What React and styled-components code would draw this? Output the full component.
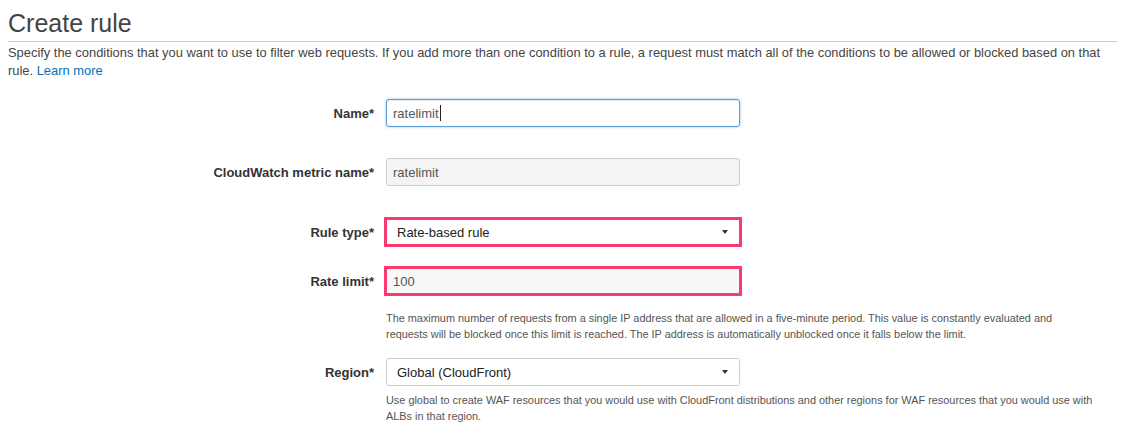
import React from "react";
import styled, { createGlobalStyle } from "styled-components";

const Global = createGlobalStyle`
  html, body { margin: 0; padding: 0; background: #fff; }
  body { font-family: "Liberation Sans", Arial, sans-serif; color: #444; }
`;

const Page = styled.div`
  padding: 0 16px 0 8px;
`;

const Title = styled.h1`
  margin: 7px 0 0;
  font-size: 25px;
  line-height: 32px;
  font-weight: 400;
  color: #444;
`;

const Rule = styled.hr`
  margin: 2px 0 0;
  border: 0;
  border-top: 1px solid #ccc;
  height: 0;
`;

const Intro = styled.p`
  margin: 2px 0 0;
  font-size: 12.9px;
  line-height: 18px;
  color: #444;
`;

const Link = styled.a`
  color: #0073bb;
  text-decoration: none;
`;

const Form = styled.div`
  display: flex;
  flex-direction: column;
`;

const Row = styled.div`
  display: grid;
  grid-template-columns: 366px 354px;
  column-gap: 12px;
  align-items: center;
  margin-top: ${(p) => p.$mt}px;
`;

const Label = styled.label`
  text-align: right;
  font-size: 13px;
  font-weight: 700;
  color: #333;
`;

const Box = styled.div`
  position: relative;
  box-sizing: border-box;
  height: 28px;
  display: flex;
  align-items: center;
  padding: 0 ${(p) => (p.$select ? "10px" : "6px")};
  border: 1px solid ${(p) => (p.$focus ? "#5b9dd9" : "#ccc")};
  border-radius: 3px;
  background: ${(p) => p.$bg || "#fff"};
  font-size: 13px;
  color: ${(p) => (p.$select ? "#222" : "#555")};
  box-shadow: ${(p) =>
    p.$focus
      ? "inset 0 1px 1px rgba(0,0,0,.075), 0 0 3px rgba(91,157,217,.6)"
      : "none"};
  ${(p) =>
    p.$mark &&
    `
    &::after {
      content: "";
      position: absolute;
      top: -2px;
      left: -3px;
      right: -3px;
      bottom: -2px;
      border: 3px solid #fb3a70;
      pointer-events: none;
    }
  `}
`;

const Cursor = styled.span`
  display: inline-block;
  width: 1px;
  height: 16px;
  background: #222;
  margin-left: 1px;
`;

const Caret = styled.span`
  position: absolute;
  right: 11px;
  top: 50%;
  margin-top: -2px;
  width: 0;
  height: 0;
  border-left: 3.5px solid transparent;
  border-right: 3.5px solid transparent;
  border-top: 4px solid #333;
`;

const Help = styled.p`
  margin: ${(p) => p.$mt}px 0 0 378px;
  max-width: 709px;
  font-size: 10.9px;
  line-height: 16px;
  color: #555;
`;

export default function App() {
  return (
    <Page>
      <Global />
      <Title>Create rule</Title>
      <Rule />
      <Intro>
        Specify the conditions that you want to use to filter web requests. If
        you add more than one condition to a rule, a request must match all of
        the conditions to be allowed or blocked based on that rule.{" "}
        <Link href="#">Learn more</Link>
      </Intro>
      <Form>
        <Row $mt={19}>
          <Label>Name*</Label>
          <Box $focus>
            ratelimit
            <Cursor />
          </Box>
        </Row>
        <Row $mt={31}>
          <Label>CloudWatch metric name*</Label>
          <Box $bg="#f4f4f4">ratelimit</Box>
        </Row>
        <Row $mt={32}>
          <Label>Rule type*</Label>
          <Box $select $mark>
            Rate-based rule
            <Caret />
          </Box>
        </Row>
        <Row $mt={21}>
          <Label>Rate limit*</Label>
          <Box $mark $bg="#f8f8f8">
            100
          </Box>
        </Row>
        <Help $mt={15}>
          The maximum number of requests from a single IP address that are
          allowed in a five-minute period. This value is constantly evaluated
          and requests will be blocked once this limit is reached. The IP
          address is automatically unblocked once it falls below the limit.
        </Help>
        <Row $mt={16}>
          <Label>Region*</Label>
          <Box $select>
            Global (CloudFront)
            <Caret />
          </Box>
        </Row>
        <Help $mt={6}>
          Use global to create WAF resources that you would use with CloudFront
          distributions and other regions for WAF resources that you would use
          with ALBs in that region.
        </Help>
      </Form>
    </Page>
  );
}
